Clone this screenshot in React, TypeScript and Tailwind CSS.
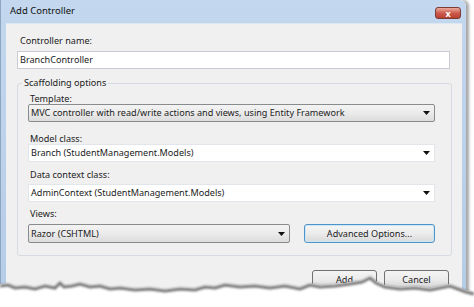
import React from 'react';

const font = { fontFamily: '"Segoe UI", "Noto Sans", sans-serif' };

const Arrow = () => (
  <svg width="7" height="4" viewBox="0 0 7 4" className="shrink-0">
    <path d="M0 0 H7 L3.5 4 Z" fill="#111" />
  </svg>
);

const ListCombo: React.FC<{ value: string; className?: string }> = ({ value, className = '' }) => (
  <div
    className={`flex h-[18px] items-center justify-between rounded-[2px] border border-[#8a8b8c] bg-gradient-to-b from-[#f3f3f3] via-[#ebebeb] to-[#dcdcdc] pl-[2px] pr-[4px] ${className}`}
  >
    <span className="whitespace-nowrap leading-[14px]">{value}</span>
    <Arrow />
  </div>
);

const EditCombo: React.FC<{ value: string }> = ({ value }) => (
  <div className="flex h-[18px] items-center justify-between border border-[#e2e5ea] bg-white pl-[2px] pr-[4px]">
    <span className="whitespace-nowrap leading-[14px]">{value}</span>
    <Arrow />
  </div>
);

const Label: React.FC<{ text: string; className?: string }> = ({ text, className = '' }) => (
  <div className={`pl-[2px] leading-[12px] ${className}`}>{text}</div>
);

const tear =
  '0,284 8,283 15,286 25,285 35,287 45,284 55,286 60,281 64,285 72,284 80,282 90,285 100,284 110,287 120,286 135,288 150,287 165,289 180,287 195,288 205,285 215,286 225,283 240,285 255,284 270,286 285,284 300,287 310,283 320,285 335,284 350,282 362,280 370,276 376,281 385,285 400,287 415,286 430,288 440,286 450,284 458,287 466,290 474,292';

export default function App() {
  return (
    <div className="relative h-[307px] w-[474px] overflow-hidden bg-white text-[9.1px] text-[#1b1b1b]" style={font}>
      <div className="flex h-[300px] w-[466px] flex-col rounded-tr-[6px] border-l border-[#8fa6c2] bg-gradient-to-b from-[#c3d7ee] to-[#b5cce7] pr-[4px] pl-[5px] shadow-[3px_0_3px_rgba(0,0,0,0.35)]">
        {/* title bar */}
        <div className="flex h-[23px] items-center justify-between">
          <span className="pl-[4px] text-[9.5px] text-[#111]">Add Controller</span>
          <div className="mr-[1px] mt-[3px] flex h-[12px] w-[26px] items-center justify-center rounded-[3px] border border-[#7a3a35] bg-gradient-to-b from-[#e9a99c] via-[#cc5c4e] to-[#b8402f]">
            <span className="text-[9px] font-bold leading-none text-white">x</span>
          </div>
        </div>

        {/* client area */}
        <div className="flex-1 border-t border-[#dde7f2] bg-[#f0f0f0] pt-[11px]">
          <div className="pl-[14px] leading-[12px]">Controller name:</div>
          <div className="ml-[11px] mr-[12px] mt-[4px] flex h-[18px] items-center border border-[#c9ccd2] bg-white pl-[2px]">
            BranchController
          </div>

          <fieldset className="ml-[11px] mr-[10px] mt-[8px] rounded-[3px] border border-[#d5dbe0] px-0 pb-[12px] pt-0">
            <legend className="ml-[4px] px-[2px] leading-[12px]">Scaffolding options</legend>
            <div className="pl-[10px] pr-[16px] pt-[4px]">
              <Label text="Template:" className="h-[11px]" />
              <ListCombo value="MVC controller with read/write actions and views, using Entity Framework" />

              <Label text="Model class:" className="mt-[11px] h-[11px]" />
              <EditCombo value="Branch (StudentManagement.Models)" />

              <Label text="Data context class:" className="mt-[7px] h-[12px]" />
              <div className="mt-[3px]">
                <EditCombo value="AdminContext (StudentManagement.Models)" />
              </div>

              <Label text="Views:" className="mt-[6px] h-[12px]" />
              <div className="mt-[4px] flex items-center gap-[14px]">
                <ListCombo value="Razor (CSHTML)" className="h-[19px] w-[262px]" />
                <div className="flex h-[19px] flex-1 items-center justify-center rounded-[3px] border border-[#4d94c9] bg-gradient-to-b from-[#f6f6f6] via-[#ececec] to-[#d9d9d9] shadow-[inset_0_0_0_1px_#cfe6f6]">
                  Advanced Options...
                </div>
              </div>
            </div>
          </fieldset>

          <div className="mr-[13px] mt-[14px] flex justify-end gap-[7px]">
            <div className="flex h-[19px] w-[65px] items-center justify-center rounded-[3px] border border-[#707070] bg-gradient-to-b from-[#f4f4f4] via-[#ebebeb] to-[#d3d3d3]">
              Add
            </div>
            <div className="flex h-[19px] w-[65px] items-center justify-center rounded-[3px] border border-[#707070] bg-gradient-to-b from-[#f4f4f4] via-[#ebebeb] to-[#d3d3d3]">
              Cancel
            </div>
          </div>
        </div>
      </div>

      {/* torn bottom edge */}
      <svg className="absolute left-0 top-[268px]" width="474" height="39" viewBox="0 268 474 39">
        <defs>
          <filter id="blur" x="-5%" y="-50%" width="110%" height="200%">
            <feGaussianBlur stdDeviation="1.2" />
          </filter>
        </defs>
        <polygon points={`${tear} 474,307 0,307`} fill="#fff" />
        <polyline
          points={tear}
          fill="none"
          stroke="#4a4a4a"
          strokeWidth="3"
          opacity="0.75"
          transform="translate(0,2)"
          filter="url(#blur)"
        />
      </svg>
    </div>
  );
}
